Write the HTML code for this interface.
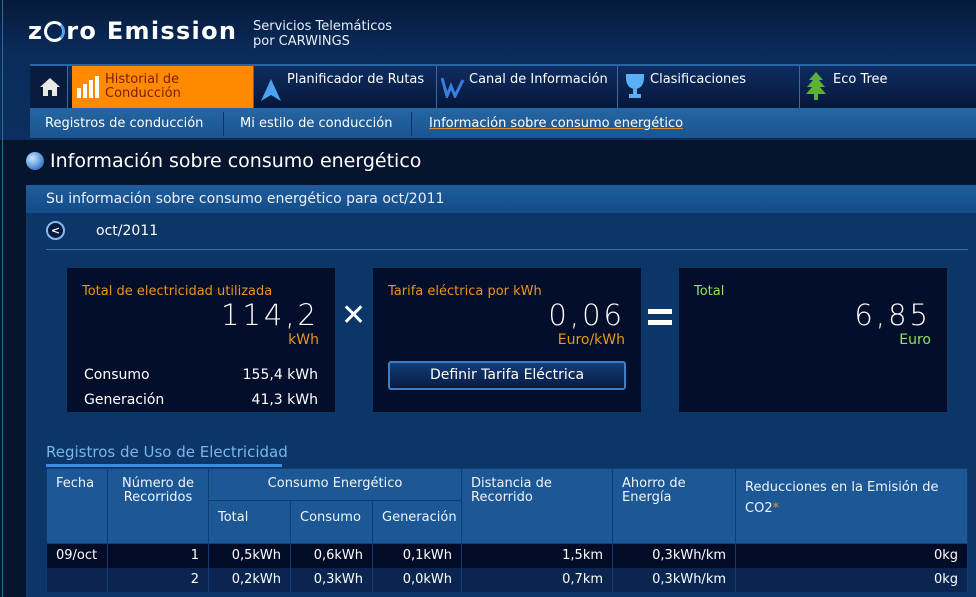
<!DOCTYPE html>
<html><head><meta charset="utf-8"><style>
*{margin:0;padding:0;box-sizing:border-box}
body{width:976px;height:597px;overflow:hidden;background:#06142e;font-family:Tahoma,"DejaVu Sans","Liberation Sans",sans-serif;color:#fff;position:relative;font-size:13px}
.abs{position:absolute}
#hdr{left:0;top:0;width:976px;height:140px;background:linear-gradient(#061a3a,#0a2c5c 40%,#0b2f60)}
#lline{left:2px;top:0;width:1px;height:597px;background:#2a6a9a}
.logo{left:28px;top:17px;font-family:"DejaVu Sans","Liberation Sans",sans-serif;font-weight:bold;font-size:24px;letter-spacing:1.3px;color:#fff}
.sub{left:253px;top:19px;font-size:13px;line-height:15px;color:#e8eef8}
#nav{left:30px;top:64px;width:946px;height:44px;background:linear-gradient(#0e2d62,#06173a);border-top:2px solid #2a66a6}
.ni{position:absolute;top:0;height:42px;border-right:1px solid #3a6aa0;font-size:13px;padding:6px 0 0 0;color:#fff}
#sub{left:30px;top:108px;width:946px;height:31px;background:linear-gradient(#2566a4,#1a5590);border-bottom:1px solid #0a2a50}
.si{position:absolute;top:8px;font-size:13px;color:#fff}
.sep{position:absolute;top:4px;width:1px;height:24px;background:#0c3566}
#panel{left:26px;top:185px;width:950px;height:412px;background:#0c3568}
#ph{left:26px;top:185px;width:950px;height:28px;background:linear-gradient(#1f5d9c,#134c88)}
.box{position:absolute;top:268px;width:268px;height:144px;background:#020e2a}
.lbl{position:absolute;left:15px;top:16px;font-size:13px}
.big{position:absolute;right:16px;top:30px;font-family:"DejaVu Sans",sans-serif;font-size:29px;font-weight:200;letter-spacing:3px;color:#fff}
.unit{position:absolute;right:16px;top:64px;font-size:14px}
table{border-collapse:collapse;position:absolute;left:46px;top:468px;font-size:13px;table-layout:fixed;width:921px}
th{background:#1c5796;font-weight:normal;text-align:left;vertical-align:top;border:1px solid #0f3c74;padding:8px 9px;color:#f0f4fa;line-height:14px;overflow:hidden}
td{border-left:1px solid #0f3c74;border-right:1px solid #0f3c74;padding:0 9px;height:24px;text-align:right;line-height:24px;white-space:nowrap;overflow:hidden}
tr.r1 td{background:#020c26}
tr.r2 td{background:#0a2550}
</style></head><body>
<div id="hdr" class="abs"></div>
<div id="lline" class="abs"></div>
<div class="abs logo">z<span style="display:inline-block;width:21px;height:21px;border:3px solid #fff;border-radius:50%;vertical-align:-3px;border-right-color:#4aa8ff;margin:0 1px"></span>ro Emission</div>
<div class="abs sub">Servicios Telemáticos<br>por CARWINGS</div>

<div id="nav" class="abs">
 <div class="ni" style="left:0;width:38px;background:#0a1c3e"><svg width="22" height="20" style="position:absolute;left:9px;top:11px" viewBox="0 0 22 20"><path d="M11 1L1 10h3v9h5v-6h4v6h5v-9h3z" fill="#e8e8e8"/></svg></div>
 <div class="ni" style="left:42px;width:182px;background:#ff8a00;color:#7a1e00;line-height:14px;padding-top:7px"><svg width="26" height="26" style="position:absolute;left:4px;top:8px" viewBox="0 0 26 26"><rect x="1" y="14" width="4" height="10" fill="#fff"/><rect x="7" y="10" width="4" height="14" fill="#fff"/><rect x="13" y="6" width="4" height="18" fill="#fff"/><rect x="19" y="2" width="4" height="22" fill="#fff"/></svg><span style="position:absolute;left:33px">Historial de<br>Conducción</span></div>
 <div class="ni" style="left:224px;width:183px"><svg width="24" height="24" style="position:absolute;left:5px;top:12px" viewBox="0 0 24 24"><path d="M12 1L2 23l10-6 10 6z" fill="#4aa2f0"/></svg><span style="position:absolute;left:33px">Planificador de Rutas</span></div>
 <div class="ni" style="left:407px;width:181px"><svg width="24" height="22" style="position:absolute;left:4px;top:10px" viewBox="0 0 24 22"><path d="M1 2l5 18 4-10 4 10 8-16" fill="none" stroke="#3a7fe0" stroke-width="3"/></svg><span style="position:absolute;left:32px">Canal de Información</span></div>
 <div class="ni" style="left:588px;width:182px"><svg width="26" height="28" style="position:absolute;left:4px;top:6px" viewBox="0 0 26 28"><path d="M4 2h18v4c0 7-4 11-9 11S4 13 4 6z" fill="#5ab0f5"/><path d="M11 17h4v5h4v4H7v-4h4z" fill="#5ab0f5"/></svg><span style="position:absolute;left:32px">Clasificaciones</span></div>
 <div class="ni" style="left:770px;width:176px;border-right:none"><svg width="20" height="30" style="position:absolute;left:6px;top:6px" viewBox="0 0 20 30"><path d="M10 0L3 8h4L1 15h5L0 22h8v6h4v-6h8l-6-7h5l-6-7h4z" fill="#5cb03a"/></svg><span style="position:absolute;left:33px">Eco Tree</span></div>
</div>

<div id="sub" class="abs">
 <div class="si" style="left:15px">Registros de conducción</div>
 <div class="sep" style="left:193px"></div>
 <div class="si" style="left:210px">Mi estilo de conducción</div>
 <div class="sep" style="left:381px"></div>
 <div class="si" style="left:399px;text-decoration:underline;text-decoration-color:#e08a30">Información sobre consumo energético</div>
</div>

<div class="abs" style="left:26px;top:152px;width:18px;height:18px;border-radius:50%;background:radial-gradient(circle at 35% 35%,#cfe4ff,#4f8fd8 60%,#23589c)"></div>
<div class="abs" style="left:50px;top:150px;font-size:19px;color:#fff">Información sobre consumo energético</div>

<div id="panel" class="abs"></div>
<div id="ph" class="abs"></div>
<div class="abs" style="left:46px;top:191px;font-size:14px;color:#eef">Su información sobre consumo energético para oct/2011</div>
<div class="abs" style="left:46px;top:221px;width:19px;height:19px;border-radius:50%;border:2px solid #8ab8f0;background:#051a40;color:#fff;font-size:11px;font-weight:bold;text-align:center;line-height:15px">&lt;</div>
<div class="abs" style="left:96px;top:223px;font-size:14px">oct/2011</div>
<div class="abs" style="left:46px;top:249px;width:922px;height:1px;background:#3c6ea6"></div>

<div class="box" style="left:67px">
 <div class="lbl" style="color:#e8961e">Total de electricidad utilizada</div>
 <div class="big">114,2</div>
 <div class="unit" style="color:#e8961e">kWh</div>
 <div style="position:absolute;left:17px;top:99px;font-size:14px">Consumo</div>
 <div style="position:absolute;right:17px;top:99px;font-size:14px">155,4 kWh</div>
 <div style="position:absolute;left:17px;top:124px;font-size:14px">Generación</div>
 <div style="position:absolute;right:17px;top:124px;font-size:14px">41,3 kWh</div>
</div>
<div class="abs" style="left:341px;top:298px;font-size:30px;font-weight:bold">✕</div>
<div class="box" style="left:373px">
 <div class="lbl" style="color:#e8961e">Tarifa eléctrica por kWh</div>
 <div class="big">0,06</div>
 <div class="unit" style="color:#e8961e">Euro/kWh</div>
 <div style="position:absolute;left:15px;top:93px;width:238px;height:29px;border:2px solid #3f7cc4;border-radius:3px;background:linear-gradient(#163e78,#061a42);text-align:center;line-height:25px;font-size:14px">Definir Tarifa Eléctrica</div>
</div>
<div class="abs" style="left:648px;top:309px;width:24px;height:5px;background:#fff"></div>
<div class="abs" style="left:648px;top:320px;width:24px;height:5px;background:#fff"></div>
<div class="box" style="left:679px">
 <div class="lbl" style="color:#8ee06a">Total</div>
 <div class="big">6,85</div>
 <div class="unit" style="color:#8ee06a">Euro</div>
</div>

<div class="abs" style="left:46px;top:443px;font-size:15px;color:#7ab6ee">Registros de Uso de Electricidad</div>
<div class="abs" style="left:46px;top:464px;width:236px;height:3px;background:#3a8ae6"></div>

<table>
<colgroup><col style="width:61px"><col style="width:101px"><col style="width:82px"><col style="width:82px"><col style="width:89px"><col style="width:151px"><col style="width:123px"><col style="width:232px"></colgroup>
<tr><th rowspan="2" style="height:75px">Fecha</th><th rowspan="2" style="text-align:center">Número de<br>Recorridos</th><th colspan="3" style="text-align:center;height:32px">Consumo Energético</th><th rowspan="2">Distancia de<br>Recorrido</th><th rowspan="2">Ahorro de<br>Energía</th><th rowspan="2" style="line-height:21px">Reducciones en la Emisión de CO2<span style="color:#e8961e">*</span></th></tr>
<tr><th style="padding-top:10px">Total</th><th style="padding-top:10px">Consumo</th><th style="padding-top:10px">Generación</th></tr>
<tr class="r1"><td style="text-align:left">09/oct</td><td>1</td><td>0,5kWh</td><td>0,6kWh</td><td>0,1kWh</td><td>1,5km</td><td>0,3kWh/km</td><td>0kg</td></tr>
<tr class="r2"><td></td><td>2</td><td>0,2kWh</td><td>0,3kWh</td><td>0,0kWh</td><td>0,7km</td><td>0,3kWh/km</td><td>0kg</td></tr>
</table>
</body></html>
